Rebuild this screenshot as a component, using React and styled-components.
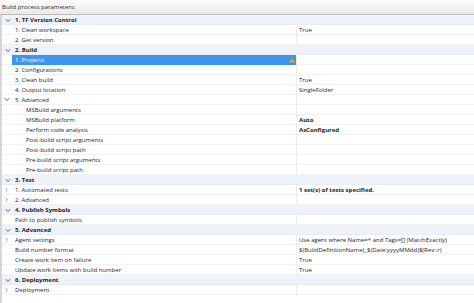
import React from 'react';
import styled, { createGlobalStyle } from 'styled-components';

const GlobalStyle = createGlobalStyle`
  html, body { margin: 0; padding: 0; background: #fff; }
  body { font-family: "Open Sans", "Noto Sans", sans-serif; }
`;

// kind: cat (bold group), item, sub (deeper indent)
const rows = [
  { kind: 'cat', name: '1. TF Version Control', chev: 'down' },
  { kind: 'item', name: '1. Clean workspace', value: 'True' },
  { kind: 'item', name: '2. Get version' },
  { kind: 'cat', name: '2. Build', chev: 'down' },
  { kind: 'item', name: '1. Projects', selected: true, warn: true },
  { kind: 'item', name: '2. Configurations' },
  { kind: 'item', name: '3. Clean build', value: 'True' },
  { kind: 'item', name: '4. Output location', value: 'SingleFolder' },
  { kind: 'item', name: '5. Advanced', chev: 'down' },
  { kind: 'sub', name: 'MSBuild arguments' },
  { kind: 'sub', name: 'MSBuild platform', value: 'Auto', bold: true },
  { kind: 'sub', name: 'Perform code analysis', value: 'AsConfigured', bold: true },
  { kind: 'sub', name: 'Post-build script arguments' },
  { kind: 'sub', name: 'Post-build script path' },
  { kind: 'sub', name: 'Pre-build script arguments' },
  { kind: 'sub', name: 'Pre-build script path' },
  { kind: 'cat', name: '3. Test', chev: 'down' },
  { kind: 'item', name: '1. Automated tests', chev: 'right', value: '1 set(s) of tests specified.', bold: true },
  { kind: 'item', name: '2. Advanced', chev: 'right' },
  { kind: 'cat', name: '4. Publish Symbols', chev: 'down' },
  { kind: 'item', name: 'Path to publish symbols' },
  { kind: 'cat', name: '5. Advanced', chev: 'down' },
  { kind: 'item', name: 'Agent settings', chev: 'right', value: 'Use agent where Name=* and Tags=[] (MatchExactly)' },
  { kind: 'item', name: 'Build number format', value: '$(BuildDefinitionName)_$(Date:yyyyMMdd)$(Rev:.r)' },
  { kind: 'item', name: 'Create work item on failure', value: 'True' },
  { kind: 'item', name: 'Update work items with build number', value: 'True' },
  { kind: 'cat', name: '6. Deployment', chev: 'down' },
  { kind: 'item', name: 'Deployment', chev: 'right' },
];

const Chevron = ({ dir }) =>
  dir === 'down' ? (
    <svg width="6" height="5" viewBox="0 0 6 5">
      <path d="M0.8 1.2 L3 3.6 L5.2 1.2" fill="none" stroke="#555" strokeWidth="0.9" />
    </svg>
  ) : (
    <svg width="5" height="6" viewBox="0 0 5 6">
      <path d="M1.4 0.8 L3.6 3 L1.4 5.2" fill="none" stroke="#a0a0a0" strokeWidth="0.9" />
    </svg>
  );

const Warn = () => (
  <svg width="6" height="6" viewBox="0 0 6 6">
    <path d="M3 0.4 L5.8 5.6 L0.2 5.6 Z" fill="#f2c23a" stroke="#b88a10" strokeWidth="0.4" />
    <path d="M3 2 L3 4" stroke="#4a3a00" strokeWidth="0.6" />
    <circle cx="3" cy="4.8" r="0.3" fill="#4a3a00" />
  </svg>
);

const App = () => (
  <>
    <GlobalStyle />
    <Page>
      <Header>Build process parameters:</Header>
      <List>
        {rows.map((r, i) => (
          <Row key={i} $cat={r.kind === 'cat'}>
            <Gutter>{r.chev && r.kind !== 'item' && <Chevron dir={r.chev} />}</Gutter>
            <Name $selected={r.selected} $cat={r.kind === 'cat'}>
              <Label $sub={r.kind === 'sub'} $cat={r.kind === 'cat'}>
                {r.kind === 'item' && r.chev && (
                  <InnerChev><Chevron dir={r.chev} /></InnerChev>
                )}
                {r.name}
              </Label>
              {r.warn && <Warn />}
            </Name>
            <Value $bold={r.bold}>{r.value}</Value>
          </Row>
        ))}
      </List>
    </Page>
  </>
);

const Page = styled.div`
  width: 474px;
  height: 303px;
  overflow: hidden;
  display: flex;
  flex-direction: column;
  color: #1e1e1e;
  font-size: 6px;
`;

const Header = styled.div`
  height: 14px;
  flex-shrink: 0;
  display: flex;
  align-items: center;
  padding-left: 2px;
  background: linear-gradient(#fbfbfb, #e9e9e9);
  border-bottom: 1px solid #bdbdbd;
  color: #2a2a2a;
`;

const List = styled.div`
  flex: 1;
  border-left: 2px solid #d6d6d6;
`;

const Row = styled.div`
  display: grid;
  grid-template-columns: 10px 285px 1fr;
  height: 10px;
  background: ${(p) => (p.$cat ? '#eef2f9' : '#fff')};
  box-shadow: inset 0 -1px 0 ${(p) => (p.$cat ? '#e8edf5' : '#f2f2f2')};
`;

const Gutter = styled.div`
  display: flex;
  align-items: center;
  padding-left: 3px;
`;

const Name = styled.div`
  display: flex;
  align-items: center;
  justify-content: space-between;
  padding-right: 1px;
  background: ${(p) => (p.$selected ? '#3d95ec' : 'transparent')};
  color: ${(p) => (p.$selected ? '#fff' : 'inherit')};
  border-right: 1px solid ${(p) => (p.$cat ? 'transparent' : '#ececec')};
  white-space: nowrap;
`;

const Label = styled.span`
  position: relative;
  padding-left: ${(p) => (p.$sub ? '14px' : '3px')};
  font-weight: ${(p) => (p.$cat ? 700 : 400)};
`;

const InnerChev = styled.span`
  position: absolute;
  left: -8px;
  top: 1px;
  display: flex;
`;

const Value = styled.div`
  display: flex;
  align-items: center;
  padding-left: 2px;
  white-space: nowrap;
  font-weight: ${(p) => (p.$bold ? 700 : 400)};
`;

export default App;
